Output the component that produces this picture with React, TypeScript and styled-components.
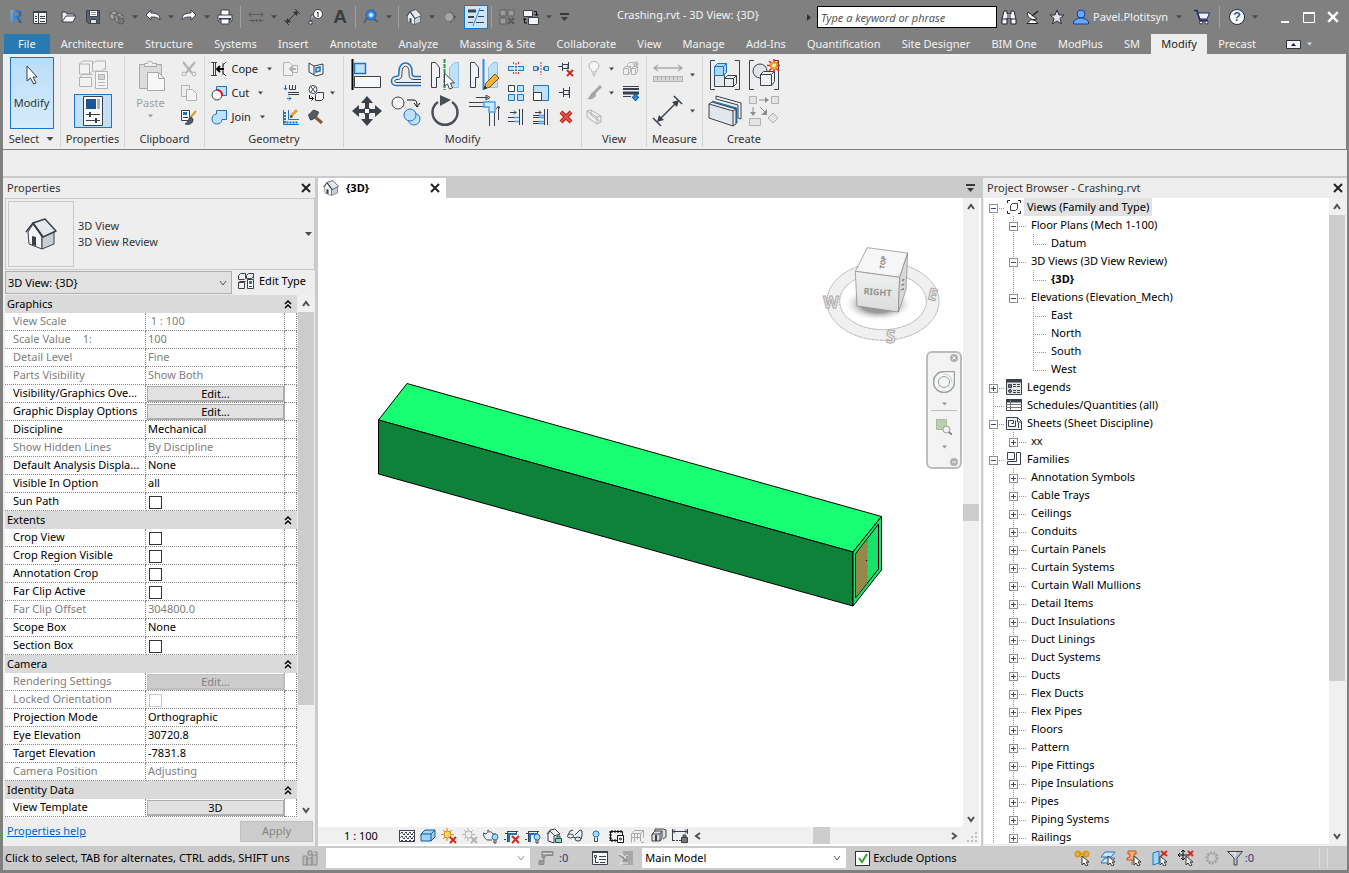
import React, { ReactNode } from "react";
import styled, { createGlobalStyle, css } from "styled-components";

/* ---------- palette ---------- */
const D = "#3a404c";
const B = "#1d74c4";
const L = "#bfe1f8";
const G = "#b2b2b2";
const R = "#d42a1e";
const FRAME = "#808080";
const PANEL = "#eeeeee";
const EDGE = "#cbcbcb";

const GlobalStyle = createGlobalStyle`
  *, *::before, *::after { box-sizing: border-box; }
  body { margin: 0; background: ${FRAME}; overflow: hidden; }
  body, button, input, select, table {
    font-family: "Noto Sans", "Open Sans", sans-serif;
    font-size: 11px;
    line-height: 16px;
    color: #000;
  }
  button, input, select { margin: 0; padding: 0; border: 0; background: none; }
  ul { margin: 0; padding: 0; list-style: none; }
  svg { display: block; flex: none; }
`;

/* ---------- icons ---------- */
type Draw = { w?: number; h?: number; box?: string; children: ReactNode };
const Pic = ({ w = 16, h = w, box, children }: Draw) => (
  <svg width={w} height={h} viewBox={box ?? `0 0 ${w} ${h}`} fill="none" stroke={D} aria-hidden="true">
    {children}
  </svg>
);

const Tri = ({ c = "#4a4a4a", s = 7 }: { c?: string; s?: number }) => (
  <svg width={s} height={4} viewBox="0 0 7 4" aria-hidden="true"><path d="M0 0h7L3.500 4z" fill={c} /></svg>
);
const Chevron = ({ dir, c = "#505050", w = 2 }: { dir: "up" | "down" | "left" | "right"; c?: string; w?: number }) => {
  const d = { up: "M2 7l3-4 3 4", down: "M2 3l3 4 3-4", left: "M7 2L3 5l4 3", right: "M3 2l4 3-4 3" }[dir];
  return <Pic w={10}><path d={d} stroke={c} strokeWidth={w} /></Pic>;
};
const Cross = ({ s = 10, c = "#222", w = 2 }: { s?: number; c?: string; w?: number }) => (
  <Pic w={s} box="0 0 10 10"><path d="M1 1l8 8M9 1l-8 8" stroke={c} strokeWidth={w} /></Pic>
);
const House = ({ s = 16 }: { s?: number }) => (
  <Pic w={s} box="0 0 32 32">
    <path d="M3 14l5-8 9 13v12L4 26z" fill="#f4f5f6" strokeLinejoin="round" />
    <path d="M17 19l12-6v13l-12 5z" fill="#c9ced4" strokeLinejoin="round" />
    <path d="M8 5l12-4 11 12-13 6z" fill="#e6e9ec" strokeWidth="1.500" strokeLinejoin="round" />
    <path d="M1 14l7-9 10 14" strokeWidth={s < 20 ? 2 : 1.5} />
    <path d="M7 18l4 1v9l-4-1z" fill={D} stroke="none" />
  </Pic>
);
const RLogo = styled.span`
  font: bold 18px/18px "Liberation Sans", sans-serif;
  background: linear-gradient(100deg, #7fc0f2, #2b7fd0 45%, #17508f);
  background-clip: text; color: transparent;
`;
const PanelIcon = () => (
  <Pic><path d="M1.500 2.500h13v12h-13z" fill="#f4f4f4" /><path d="M1 3h14" strokeWidth="2" /><path d="M3 7.500h2M3 9.500h2M3 12.500h2M8 7.500h5M8 9.500h5M8 12.500h5M6.500 4v10" /></Pic>
);
const Folder = () => (
  <Pic><path d="M1 13V3h4l1 2h7v3" fill="#e8e8e8" /><path d="M1 13l4-6h10l-3 6z" fill="#fff" /></Pic>
);
const Save = () => (
  <Pic><path d="M1.500 1.500h13v13h-11l-2-2z" fill="#5b6170" /><path d="M4.500 1.500h8v6h-8z" fill="#fff" /><path d="M5.500 10.500h6v4h-6z" fill="#e0e0e0" /><path d="M6 3.500h5M6 5.500h5" stroke="#999" /></Pic>
);
const Sync = () => (
  <Pic><path d="M1 4l4-2 4 2v5l-4 2-4-2zM6 6l4-2 4 2v6l-4 2-4-2z" fill="#a9a9a9" stroke="#626262" /><path d="M1 4l4 2 4-2M6 6l4 2 4-2M10 8v6M5 6v5" stroke="#626262" /><circle cx="12" cy="12" r="3" fill="#777" stroke="#5c5c5c" /></Pic>
);
const Undo = ({ flip }: { flip?: boolean }) => (
  <Pic><path d={flip ? "M15 6l-5-5v3C4 4 1 6 1 11c2-3 5-3 9-3v3z" : "M1 6l5-5v3c6 0 9 2 9 7-2-3-5-3-9-3v3z"} fill="#fff" /></Pic>
);
const Print = () => (
  <Pic><path d="M4 6V1h8v5" fill="#fff" /><path d="M1 6h14v6H1z" fill="#f3f3f3" /><path d="M2 10h12" strokeWidth="2" /><path d="M4 10h8v5H4z" fill="#fff" /></Pic>
);
const MeasureSmall = () => (
  <Pic><path d="M1 5.500h14M3 3L1 5.500l2 2.500M13 3l2 2.500-2 2.500M1 11.500h14M4.500 10v3M8.500 10v3M12.500 10v3" stroke="#5c5c5c" /></Pic>
);
const DimSmall = () => (
  <Pic><path d="M3 13L13 3" stroke="#333" /><path d="M2 14l1-5 4 4zM14 2l-5 1 4 4z" fill="#333" stroke="none" /><path d="M0 11l5 5M11 0l5 5" stroke="#333" /></Pic>
);
const Tag = () => (
  <Pic><circle cx="10" cy="5" r="4.500" fill="#fff" /><path d="M5 6H3v7M1 12h3v3H1z" fill="#fff" /><path d="M9 4l1-1v5" stroke="#222" /></Pic>
);
const LetterA = styled.span`font: bold 19px/20px "Liberation Sans", sans-serif; color: #3c3c3c;`;
const Sphere = () => (
  <Pic><path d="M4 9l-3 5M11 10l4 3" stroke="#56606c" strokeWidth="2" /><circle cx="8" cy="6" r="5" fill="#2f86d8" stroke="#1f5fa5" /><circle cx="8" cy="6" r="2" fill="#dceefb" stroke="#9fcaf0" /></Pic>
);
const SectionMark = () => (
  <Pic><path d="M8 2l6 6-6 6z" fill="#4a4a4a" stroke="none" /><circle cx="7" cy="8" r="4.500" fill="#a5a5a5" stroke="#777" /></Pic>
);
const ThinLines = () => (
  <Pic w={18}><path d="M1 3h8" strokeWidth="3" /><path d="M1 9h6" strokeWidth="2" /><path d="M1 14.500h5M12 2.500h5M11 8.500h6M9 14.500h8" /><path d="M13 0L6 18" stroke="#2f8de6" /></Pic>
);
const CloseHidden = () => (
  <Pic><path d="M1 1h6v6H1zM9 1h6v6H9zM1 9h6v6H1z" fill="#9b9b9b" stroke="#606060" /><path d="M9 9l6 6M15 9l-6 6" stroke="#5a5a5a" strokeWidth="2" /></Pic>
);
const Switch = () => (
  <Pic><path d="M.5 1.500h9v6h-9zM5.500 8.500h10v7h-10z" fill="#f4f4f4" /><path d="M11 2.500h2.500V6M1.500 10v4H4" stroke="#111" /><path d="M11.500 5l2 2 2-2M0 11l1.500-2L3 11" stroke="#111" /></Pic>
);
const Customize = () => (
  <Pic w={9} h={8}><path d="M0 1h9" stroke="#3a3a3a" strokeWidth="2" /><path d="M1 4h7L4.500 8z" fill="#3a3a3a" stroke="none" /></Pic>
);
const Binoculars = () => (
  <Pic><path d="M3 2h3v3h4V2h3l2 8v5h-5V9H6v6H1v-5z" fill="#f5f5f5" stroke="#1f2430" /><path d="M1 10h5M10 10h5M6 7h4" stroke="#1f2430" /></Pic>
);
const Dish = () => (
  <Pic><path d="M2 14.500h11l-3-3-4-1z" fill="#fff" stroke="#222" /><path d="M3 3c-2 5 3 9 9 7z" fill="#fff" stroke="#222" /><path d="M7 7l6-5" stroke="#222" strokeWidth="1.500" /></Pic>
);
const Star = () => (
  <Pic><path d="M8 1l2 5h5l-4 3.500 1.500 5.500L8 12l-4.500 3L5 9.500 1 6h5z" fill="#dfe3e8" stroke="#2a2d36" /></Pic>
);
const User = () => (
  <Pic><circle cx="8" cy="5" r="4" fill="#6aa8ff" stroke="#173c8a" /><path d="M.5 15v-2c1-3 5-3 5.500-4h4c.5 1 4.500 1 5.500 4v2z" fill="#6aa8ff" stroke="#173c8a" /></Pic>
);
const Cart = () => (
  <Pic><path d="M3 4h12.500L13 10H6z" fill="#f0f0ff" stroke="#202a66" /><path d="M0 1.500h3l3 10h8" stroke="#202a66" strokeWidth="1.500" /><circle cx="7" cy="13.500" r="1.500" fill="#fff" stroke="#202a66" /><circle cx="12.500" cy="13.500" r="1.500" fill="#fff" stroke="#202a66" /></Pic>
);
const HelpMark = styled.span`
  display: grid; place-items: center; width: 16px; height: 16px; border-radius: 50%;
  border: 1px solid #1e2b44; background: #fff; color: #1f5bbf; font: bold 13px/14px "Liberation Sans", sans-serif;
`;
const Minimise = () => <Pic w={12}><path d="M2 11h8" stroke="#fff" strokeWidth="2" /></Pic>;
const Maximise = () => <Pic w={12}><path d="M.5 1.500h11v10h-11z" stroke="#fff" /><path d="M0 2h12" stroke="#fff" strokeWidth="2" /></Pic>;

const Cursor = () => (
  <Pic w={14} h={20}><path d="M2 1v15l3.500-3 3 6 2.500-1-3-6h4z" fill="#fff" /></Pic>
);
const TypeProps = () => (
  <Pic w={32}>
    <path d="M2.500 5l3-3h10v10l-3 3h-10zM15.500 5l3-3h10v9M15.500 5v7h9l4-3M2.500 18.500h12v9h-12zM2.500 18.500l3-3h10M2.500 5h10v10" fill="#f2f2f2" stroke={G} />
    <path d="M18.500 12.500h12v17h-12z" fill="#f5f5f5" stroke={G} /><path d="M21.500 15.500h6v5h-6z" stroke={G} fill="#d4d4d4" /><path d="M21 23.500h7M21 26.500h7" stroke={G} />
  </Pic>
);
const PropsBig = () => (
  <Pic w={20} h={30}>
    <path d="M.5.5h19v29H.5z" fill="#f8fafc" /><path d="M3 3h10v10H3z" fill="#1b5596" stroke="none" /><path d="M14 3h3v10h-3z" fill="#9fb4c8" stroke="none" />
    <path d="M3 18.500h14M3 24.500h14" /><path d="M7 16v5M13 22v5" strokeWidth="2" />
  </Pic>
);
const Paste = () => (
  <Pic w={32}>
    <path d="M4.500 4.500h22v24h-22z" fill="#dcdcdc" stroke="#a9a9a9" /><path d="M9.500 6.500v-3h3c0-3 5-3 5 0h4v3z" fill="#f0f0f0" stroke="#a9a9a9" />
    <path d="M12.500 12.500h11l6 6v12h-17z" fill="#f7f7f7" stroke="#a9a9a9" /><path d="M23.500 12.500v6h6" stroke="#a9a9a9" />
  </Pic>
);
const Scissors = () => (
  <Pic><path d="M2 1l9 11M14 1L5 12" stroke={G} strokeWidth="2" /><circle cx="3" cy="13" r="2" stroke={G} /><circle cx="13" cy="13" r="2" stroke={G} /></Pic>
);
const CopyIcon = () => (
  <Pic><path d="M.5.500h8v3M.5.500v11h5" stroke={G} /><path d="M5.500 4.500h6l4 4v7h-10z" fill="#f3f3f3" stroke={G} /></Pic>
);
const MatchType = () => (
  <Pic><path d="M.5 1.500h8v10h-8z" fill="#fff" /><path d="M2 3h4v3H2z" fill={B} stroke="none" /><path d="M2 8.500h5" /><path d="M15 2l-6 7" stroke="#d69a3c" strokeWidth="2" /><path d="M10 8c-3 1-2 5-6 7 4 1 8 0 8-5z" fill="#555c68" /></Pic>
);
const Cope = () => (
  <Pic><path d="M0 1.500h6M0 14.500h6M2.500 2v12M4.500 2v12M15 1l-3 3v8l3 3M12 6V2M12 10v4" /><path d="M6 8h7M9 5L6 8l3 3" stroke="#000" strokeWidth="2" /></Pic>
);
const CutIcon = () => (
  <Pic><path d="M5.500 1.500h10v9h-10z" fill={L} stroke={B} /><circle cx="6" cy="10" r="5" fill="#fff" /><path d="M6 5a5 5 0 0 1 5 5" stroke="#f00" strokeWidth="2" /></Pic>
);
const Join = () => (
  <Pic><path d="M5.500 1.500h10v9h-4.500a5 5 0 1 1-5.500-5.500z" fill={L} stroke={B} /></Pic>
);
const Offset16 = () => (
  <Pic><path d="M.5 1.500h6l3 3h5v7h-5v3h-9z" fill="#f1f1f1" stroke={G} /><path d="M13 8H8M10 5L7 8l3 3" stroke={G} strokeWidth="2" /></Pic>
);
const Opening = () => (
  <Pic><path d="M1 2l5 3 9-2v10l-7 2-7-4z" fill="#eef2f5" /><path d="M6 5v9" /><path d="M8 7l4-1v4l-4 1z" fill={L} stroke={B} strokeWidth="1.500" /></Pic>
);
const BeamJoin = () => (
  <Pic><path d="M2.500 0v5M1 3l1.500 2L4 3M4 13.500h4M6 11.500l2 2-2 2" stroke={B} /><path d="M5 7.500h11M5 9.500h11M6.500 0v4.500h6V0M9.500 0v4" /></Pic>
);
const WallJoin = () => (
  <Pic><circle cx="5" cy="4.500" r="4" fill="#fff" /><path d="M3 2l4 5M7 2L3 7" /><path d="M7.500 9.500l2-2h6v6l-2 2h-6z" fill="#f2f4f6" /><path d="M1.500 10v3.500H5M3.500 11.500l2 2-2 2" stroke="#000" /></Pic>
);
const SplitFace = () => (
  <Pic><path d="M.5 1v14.500H16M5.500 1v9.500H16" stroke={B} /><path d="M2 3v10.500h13" stroke={B} strokeWidth="2" strokeDasharray="2 1" /><path d="M14 1L7 8" stroke="#e3a33b" strokeWidth="3" /><path d="M7 9l1-3 2 2z" fill="#333" stroke="none" /></Pic>
);
const Hammer = () => (
  <Pic><path d="M6 7l8 7" stroke="#8a5a33" strokeWidth="3" /><path d="M.5 6l5-5 5 2-1 3-4 4-3 1z" fill="#555c68" /></Pic>
);
const Align = () => (
  <Pic w={32}><path d="M1.500 0v31" stroke="#000" strokeWidth="2" /><path d="M3.500 4.500h11v10h-11z" fill={L} stroke={B} strokeWidth="1.500" /><path d="M3.500 17.500h26v11h-26z" fill="#f7f7f7" /></Pic>
);
const Offset = () => (
  <Pic w={32}>
    <path d="M31 26.500H6c-6 0-6-9 0-9 3 0 3-2 3-5C9 1 22 1 22 12.500c0 3 0 5 3 5h6" stroke={B} strokeWidth="1.500" />
    <path d="M31 23.500H7c-3 0-3-3 0-3 5 0 5-3 5-8 0-7 7-7 7 0 0 5 0 8 6 8h6" />
  </Pic>
);
const Mirror = ({ draw }: { draw?: boolean }) => (
  <Pic w={32}>
    <path d="M2.500 3.500h4l4 5v10h-3v10h-5z" fill="#f1f3f5" /><path d="M29.500 3.500h-4l-5 5v20h9z" fill={L} stroke="#8dc0ea" />
    {draw ? (
      <><path d="M15.500 0v31" stroke="#2f8de6" strokeWidth="2" /><path d="M16 30l2-6 9-9 4 4-9 9z" fill="#f2b33d" stroke="#7a5020" /><path d="M16 30l1-3 2 2z" fill="#333" /></>
    ) : (
      <><path d="M15.500 0v31" stroke="#2c9a3a" strokeWidth="2" strokeDasharray="4 1" /><path d="M15.500 14v13l3-2 2 5 3-1-2-5h4z" fill="#fff" /></>
    )}
  </Pic>
);
const Move = () => (
  <Pic w={32}>
    <path d="M16 1l6 7h-4v5h-4V8h-4zM16 31l6-7h-4v-5h-4v5h-4zM1 16l7-6v4h5v4H8v4zM31 16l-7-6v4h-5v4h5v4z" fill={D} stroke="none" />
    <path d="M13.500 13.500h5v5h-5z" fill="#fff" />
  </Pic>
);
const CopyBig = () => (
  <Pic w={32}><circle cx="8" cy="8" r="6" fill="#f4f4f4" /><path d="M17 5h6c3 0 4 1 4 6M24 8l3 4 3-4" stroke="#111" /><circle cx="24" cy="24" r="6" fill={L} stroke={B} /><circle cx="20" cy="20" r="6" fill={L} stroke={B} /></Pic>
);
const Rotate = () => (
  <Pic w={32}><path d="M9 7a12.500 12.500 0 1 0 14 0" stroke="#4a4f58" strokeWidth="2.500" /><path d="M11 0l11 5-11 6z" fill="#4a4f58" stroke="none" /></Pic>
);
const TrimCorner = () => (
  <Pic w={32}><path d="M1 7.500h15M1 11.500h15M21.500 17v14M26.500 17v14" /><path d="M16 7h11v10h-6v-5h-5z" fill="#cfe8fb" stroke="#4ba3ee" strokeWidth="1.500" /><path d="M8 2.500h12M18 0l4 2.500L18 5zM30.500 25V12M28 14l2.500-3 2 3" /></Pic>
);
const Split1 = () => (
  <Pic><path d="M.5 5.500h15v4H.500z" fill={L} stroke={B} /><path d="M6.500 3v9M9.500 3v9" stroke="#eee" /><path d="M5.500 1v3M10.500 1v3M5.500 11v3M10.500 11v3M8 2v11" stroke={R} strokeDasharray="2 1" /></Pic>
);
const Split2 = () => (
  <Pic><path d="M.5 5.500h4v4h-4zM11.500 5.500h4v4h-4z" fill={L} stroke={B} /><path d="M8 1v13" stroke={R} strokeDasharray="2 1" /><path d="M5.500 6v3M10.500 6v3" stroke={B} /></Pic>
);
const Unpin = () => (
  <Pic><path d="M0 5.500h4M4.500 2v8M4 3.500h6v4H4M10.500 1v7" /><path d="M9 9l6 6M15 9l-6 6" stroke={R} strokeWidth="2" /></Pic>
);
const Pin = () => (
  <Pic><path d="M1 7.500h4M5.500 3v9M5 5.500h6v4H5M11.500 2v11" /></Pic>
);
const ArrayIcon = () => (
  <Pic><path d="M.5.500h6v6h-6z" fill="#f7f7f7" /><path d="M9.500.500h6v6h-6zM.5 9.500h6v6h-6zM9.500 9.500h6v6h-6z" fill={L} stroke={B} /></Pic>
);
const Scale = () => (
  <Pic><path d="M.5.500h15v15H.500z" fill={L} stroke={B} /><path d="M.5 7.500h8v8h-8z" fill="#fff" /></Pic>
);
const Trim1 = ({ multi }: { multi?: boolean }) => (
  <Pic>
    <path d="M0 8.500h6M0 12.500h6M11.500 0v16M14.500 0v16M2 3.500h6M6 1.500l2 2-2 2" />{multi && <path d="M0 6.500h6M0 14.500h6" />}
    <path d={multi ? "M6 6.500h5M6 8.500h5M6 12.500h5M6 14.500h5" : "M6 8.500h5M6 12.500h5"} stroke="#4ba3ee" strokeWidth="1.500" />
  </Pic>
);
const Delete = () => (
  <Pic><path d="M3 3l10 10M13 3L3 13" stroke="#a8231a" strokeWidth="4" /><path d="M3 3l10 10M13 3L3 13" stroke="#f0503f" strokeWidth="2" /></Pic>
);
const Bulb = () => (
  <Pic><path d="M6 11c0-3-3-3-3-6 0-6 10-6 10 0 0 3-3 3-3 6zM6 13h4M7 15h2" fill="#f7f7f7" stroke={G} /></Pic>
);
const Brush = () => (
  <Pic><path d="M15 1L8 8" stroke="#a4a4a4" strokeWidth="3" /><path d="M8 7c-4 0-3 5-7 7 5 1 9-1 9-5z" fill="#a4a4a4" stroke="none" /></Pic>
);
const Cubes = () => (
  <Pic><path d="M.5 7.500l2-2h5v5l-2 3h-5zM.5 7.500h5v6M5.500 7.500l2-2M8.500 7.500l2-2h4v5l-2 3h-4zM8.500 7.500h4v6M12.500 7.500l2-2M4.500 5V3.500l2-2h4" fill="#f0f0f0" stroke={G} /><path d="M13 0v6M10 3h6M11 1l4 4M15 1l-4 4" stroke={G} /></Pic>
);
const Linework = () => (
  <Pic><path d="M0 1.500h16M0 11.500h8" /><path d="M0 4h16" strokeWidth="2" /><path d="M0 8h16" strokeWidth="3" /><path d="M11 9h3v3h2l-3.500 4L9 12h2z" fill="#2f8de6" stroke="#0d4f94" /></Pic>
);
const Box3 = () => (
  <Pic><path d="M1 2l4-1 10 6v6l-4 2L1 8zM1 2l10 6v7M11 8l4-1M5 1v5l10 7" stroke={G} /></Pic>
);
const RulerBig = () => (
  <Pic w={32}><path d="M2 9h28M6 6L2 9l4 3M26 6l4 3-4 3" stroke="#a9a9a9" strokeWidth="1.500" /><path d="M1.500 17.500h29v5h-29z" fill="#d8d8d8" stroke={G} /><path d="M5.500 18v3M9.500 18v3M13.500 18v3M17.500 18v3M21.500 18v3M25.500 18v3" stroke={G} /></Pic>
);
const DimBig = () => (
  <Pic w={32}><path d="M7 25L25 7" strokeWidth="1.500" /><path d="M5 27l2-7 5 5zM27 5l-7 2 5 5z" fill={D} stroke="none" /><path d="M1 23l8 8M22 1l8 8" strokeWidth="1.500" /></Pic>
);
const Bracket = () => <path d="M6 1.500H1.500v29H6M26 1.500h4.500v29H26" />;
const CreateParts = () => (
  <Pic w={32}><Bracket /><path d="M5.500 16.500h10v11h-10z" fill="#e4e9ee" /><path d="M15.500 19.500l3-3h9v8l-3 3h-9zM15.500 19.500h9v8M24.500 19.500l3-3" fill="#e9edf0" /><path d="M5.500 7.500l3-3h9v9l-3 3h-9zM5.500 7.500h9v9M14.500 7.500l3-3" fill="#a8d6f4" stroke={B} /></Pic>
);
const CreateAsm = () => (
  <Pic w={32}>
    <Bracket /><circle cx="12" cy="12" r="7" fill="#dde4ea" /><path d="M12.500 15.500l3-3h11v10l-3 4h-11zM12.500 15.500h11v11M23.500 15.500l3-3" fill="#f1f3f5" />
    <path d="M26 0v13M19 6.500h13M21 2l10 10M31 2L21 12" stroke="#e6261b" strokeWidth="1.500" /><circle cx="26" cy="6.500" r="4" fill="#ff8f1f" stroke="none" /><circle cx="26" cy="6.500" r="2" fill="#fff6a0" stroke="none" />
  </Pic>
);
const Group = () => (
  <Pic w={34} h={32}><path d="M8 1l25 7v16l-3-1V10L8 4z" fill="#eef1f4" /><path d="M4 6l25 7v15l-3-1" fill="#2f8de6" stroke={B} /><path d="M1 9l24 7v15L1 23zM1 9l3-2 24 7v15l-3 2M25 16l3-2" fill="#e2e7ec" /></Pic>
);
const Similar = () => (
  <Pic w={32}><path d="M1.500 1.500h7v7h-7zM23.500 1.500h7v7h-7zM1.500 23.500h11v7h-11zM25 18l5 5-5 5-5-5z" fill="#e4e4e4" stroke="#b0b0b0" /><path d="M11 5h9M5 12v7M12 12l7 7" stroke="#8e8e8e" /><path d="M17 2l4 3-4 3zM2 17l3 4 3-4zM19 14v6h-6z" fill="#8e8e8e" stroke="none" /></Pic>
);
const EditTypeIcon = () => (
  <Pic><path d="M.5 2.500l2-2h5v5l-1 1h-6zM8.500 2.500l2-2h5v5M8.500 2.500v3h5l2-2M.5 9.500h6v6h-6zM.5 9.500l1-1h6" fill="#f3f3f3" /><path d="M9.500 6.500h6v9h-6z" fill="#fff" /><path d="M11 8h3v3h-3z" fill={B} stroke="none" /><path d="M11 13.500h3" /></Pic>
);

/* view control bar icons */
const Hatch = () => (
  <Pic>
    <path d="M0 2.500h16v11H.500V2.500M15.500 2v12" fill="#f7f7f7" />
    <path d="M2 4.500h13M2 8.500h13M2 12.500h13" strokeDasharray="2 2" /><path d="M4 6.500h11M4 10.500h11" strokeDasharray="2 2" />
    <path d="M1 5.500h14M1 9.500h14" strokeDasharray="1 1" stroke="#8a8e96" />
  </Pic>
);
const BlueBox = () => <Pic><path d="M1 6l4-4h10v7l-4 4H1zM1 6h10v7M11 6l4-4" fill="#9fd4f8" stroke="#14589b" /></Pic>;
const SunOff = ({ off }: { off?: boolean }) => (
  <Pic>
    <path d="M6 0v13M0 6.500h13M2 2l9 9M11 2l-9 9" stroke={off ? G : "#d98a1c"} /><circle cx="6.500" cy="6.500" r="3.500" fill={off ? "#eee" : "#ffd56a"} stroke={off ? G : "#d98a1c"} />
    <path d="M9 9l6 6M15 9l-6 6" stroke={off ? G : R} strokeWidth="2" />
  </Pic>
);
const Teapot = () => <Pic><path d="M0 5l3 1c1-3 6-3 7 0h3v3M0 5c1 5 3 7 5 7h4M4 3l2-1" fill="#f4f4f4" /><circle cx="12" cy="9" r="3" fill="#a8dcff" stroke={B} /><path d="M11 12v3h2v-3" /></Pic>;
const CropOff = ({ shown }: { shown?: boolean }) => (
  <Pic><path d="M3.500 3v11M0 11.500h2M12.500 3v4M1 5.500h2" /><path d="M4 6h9M5 6v8" stroke={B} strokeWidth="2" /><path d="M3 3.500h11" />{shown ? <><circle cx="12" cy="9" r="3" fill="#a8dcff" stroke={B} /><path d="M11 12v3h2v-3" /></> : <path d="M8 8l7 7M15 8l-7 7" stroke={R} strokeWidth="2" />}</Pic>
);
const LockHouse = () => <Pic><path d="M1 6l3-4 5-1 5 5-6 2v7l-6-2V6l2-3 5 5" fill="#f4f4f4" /><path d="M9.500 10.500h6v4h-6zM11 10V8h3v2" fill="#8fd4c8" /></Pic>;
const Glasses = () => <Pic><path d="M1 7l2-4 3-1M6 9l3 1M8 7l5-5 2 1v5l-1 3" /><ellipse cx="3.500" cy="8" rx="3" ry="2" fill="#e3eef5" /><ellipse cx="11" cy="11" rx="3" ry="2" fill="#e3eef5" /></Pic>;
const Lamp = () => <Pic><circle cx="8" cy="6" r="3" fill="#a8dcff" stroke={B} /><path d="M6.500 9.500v4h3v-4" /></Pic>;
const Temp = () => <Pic><path d="M1.500 3.500h12v9h-12z" stroke="#111" /><path d="M1.500 3v10M2 3.500h12M2 12.500h6" stroke="#111" strokeWidth="2" strokeDasharray="2 1" /><path d="M8.500 7.500h6v7h-6z" fill="#fff" stroke="#111" /><circle cx="11.500" cy="11" r="1" stroke="#111" /></Pic>;
const Analytic = () => <Pic><path d="M2.500 4.500l2-2h9v7M1.500 5.500h9v8M1.500 5.500v9M4.500 5.500v8M7.500 5.500v6M1.500 9.500h9M10.500 5.500l3-3M11 14.500h3" stroke="#aaa" /></Pic>;
const Displace = () => <Pic><path d="M1 6l3-3h7l-2 3v7H1zM1 6h8M11 3v7l-2 3M4 3V1h8l3 1v7l-3 2" fill="#d9dde1" stroke="#444" /><path d="M5 7v6" strokeWidth="2" /></Pic>;
const Constraints = () => <Pic><path d="M.5 1v12M15.500 1v5M1 3.500h14M3 1.500l-2 2 2 2M13 1.500l2 2-2 2" /><path d="M1 12.500h8" strokeDasharray="2 1" /><path d="M9.500 9.500h6v5h-6zM11 9V7h3v2" fill="#777" /></Pic>;

/* status bar icons */
const Worksets = () => <Pic><path d="M1 6h4v9H1zM5 8h5v7H5zM10 5h5v10h-5zM6 1h4v4H6zM12 2h3v3" fill="#bcbcbc" stroke="#8c8c8c" /></Pic>;
const EditReq = () => <Pic><path d="M4 1.500h11v4H8l-2 3v6H1v-4h4l1-3H4z" fill="#9a9a9a" stroke="#888" /><path d="M5 3.500h9" stroke="#ddd" /></Pic>;
const OptionsIcon = () => <Pic><path d="M.5 1.500h15v13H.500z" fill="#f8f8f8" /><path d="M0 2h16" strokeWidth="2" /><path d="M2.500 5.500h2v2h-2zM3.500 8v4.500h3M7 6.500h7M7 9.500h7M8 12.500h5" /></Pic>;
const AddSet = () => <Pic><path d="M5 1h10v14H5z" fill="#a8a8a8" stroke="none" /><path d="M1 4c5 0 6 3 7 5M9 5v6H3zM2 13h8" stroke="#e8e8e8" /><path d="M1 5l8 6M9 6v5H4" stroke="#777" /></Pic>;
const Pointer = () => <path d="M8 6v9l2-2 2 3 2-1-2-3h3z" fill="#fff" stroke="#333" />;
const SelLinks = () => <Pic><circle cx="4" cy="4" r="2.500" stroke="#dc9a13" strokeWidth="2" /><circle cx="12" cy="4" r="2.500" stroke="#dc9a13" strokeWidth="2" /><path d="M4 4h8" stroke="#dc9a13" strokeWidth="2" /><Pointer /></Pic>;
const SelUnder = () => <Pic><path d="M5 2h10l-4 5H1zM5 8h10l-4 5H1z" fill="#cfe6f8" stroke={B} /><Pointer /></Pic>;
const SelPin = () => <Pic><path d="M2 1h8v3H8v3l3 1v2H1V8l3-1V4H2zM6 10v5" fill="#f6b26b" stroke="#c0512b" /><Pointer /></Pic>;
const SelFace = () => <Pic><path d="M1 3l6-2v12l-6 2z" fill="#a6d6f7" stroke={B} /><path d="M9 1l6 5M15 1L9 6" stroke={R} strokeWidth="2" /><Pointer /></Pic>;
const SelDrag = () => <Pic><path d="M5 0v10M0 5h10M3 2l2-2 2 2M3 8l2 2 2-2M2 3L0 5l2 2" stroke="#111" /><path d="M10 1l5 5M15 1l-5 5" stroke={R} strokeWidth="2" /><Pointer /></Pic>;
const Gear = () => <Pic><circle cx="8" cy="8" r="5" stroke="#a2a2a2" strokeWidth="3" strokeDasharray="2 1" /></Pic>;
const Funnel = () => <Pic><path d="M.5 1.500h15L10 8v7H7V8z" fill="#b9c2cc" stroke="#444" /><path d="M3 3h6L7 7" stroke="#fff" /></Pic>;

/* browser icons */
const BViews = () => <Pic><path d="M4 1.500H1.500V4M12 1.500h2.500V4M4 14.500H1.500V12M12 14.500h2.500V12" stroke="#222" /><path d="M4.500 6.500l2-2h5v5l-2 2h-5z" stroke="#444" fill="#fff" strokeLinejoin="round" /></Pic>;
const BLegends = () => <Pic><path d="M.5.500h15v15H.500z" fill="#e6e6e6" /><path d="M0 2h16" strokeWidth="3" /><path d="M2.500 5.500h3v3h-3z" fill="#777" /><circle cx="4" cy="12" r="1.500" fill="#777" /><path d="M7 5.500h7M7 7.500h7M7 11.500h7M7 13.500h7" strokeDasharray="3 1" /></Pic>;
const BSched = () => <Pic><path d="M.5 2.500h15v11H.500z" fill="#fff" /><path d="M0 4h16" strokeWidth="3" /><path d="M4.500 3v11M0 7.500h16M0 10.500h16" stroke="#777" /></Pic>;
const BSheets = () => <Pic><path d="M.5 2.500h11l4 4v8H.500z" fill="#f3f3f3" /><path d="M2.500 5.500h5v3h-2M2.500 5.500v6h7v-6M11.500 3v4h4M12.500 8v5" /></Pic>;
const BFam = () => <Pic><path d="M1.500 1.500h7v7h-7zM10.500 1.500h4v12h-13v-3h9z" fill="#fff" /></Pic>;

/* ---------- shared controls ---------- */
const Window = styled.div`
  display: flex; flex-direction: column; height: 100vh; min-width: 1200px;
  background: ${FRAME}; padding: 0 2px 3px 3px; user-select: none;
`;
const IconButton = styled.button<{ $w?: number; $on?: boolean }>`
  display: grid; place-items: center; flex: none; width: ${p => p.$w ?? 24}px; height: 24px;
  ${p => p.$on && css`background: #cbe6fb; border: 1px solid ${B};`}
`;

/* ---------- title bar ---------- */
const TitleBar = styled.header`
  display: flex; align-items: center; height: 34px; flex: none; padding: 0 2px 0 1px;
`;
const Bar = styled.div`display: flex; align-items: center;`;
const TitleRule = styled.i`flex: none; width: 1px; height: 22px; margin: 0 3px; background: #a0a0a0;`;
const Gap = styled.i<{ $w: number }>`flex: none; width: ${p => p.$w}px;`;
const Title = styled.h1`
  flex: 1; margin: 0; padding-bottom: 4px; font-size: 11px; font-weight: 400; line-height: 16px; text-align: center; color: #f4f4f4;
`;
const Search = styled.input`
  width: 180px; height: 22px; border: 1px solid #000; background: #fff; padding: 0 3px; font-style: italic;
  &::placeholder { color: #555; opacity: 1; }
`;
const UserName = styled.button`color: #f4f4f4; width: 80px; text-align: left;`;

const Drop = () => <IconButton $w={12} aria-label="More"><Tri s={6} /></IconButton>;
const Tool = ({ name, on, children }: { name: string; on?: boolean; children: ReactNode }) => (
  <IconButton aria-label={name} $on={on}>{children}</IconButton>
);

/* ---------- ribbon tabs ---------- */
const TabRow = styled.nav`display: flex; align-items: stretch; height: 20px; flex: none; padding-left: 1px;`;
const TabList = styled.div`display: flex; justify-content: space-between; flex: 0 1 1262px;`;
const Tab = styled.button<{ $kind?: "file" | "active" }>`
  padding: 0 10px; color: #f2f2f2;
  ${p => p.$kind === "file" && css`background: #2a7ab2; padding: 0 14px;`}
  ${p => p.$kind === "active" && css`background: ${PANEL}; color: #1c1c1c;`}
`;
const Collapse = styled.button`display: flex; align-items: center; gap: 6px; margin-left: 20px;`;

/* ---------- ribbon ---------- */
const Ribbon = styled.section`
  display: flex; flex: none; height: 95px; padding: 2px 0; background: ${PANEL}; margin-right: 1px;
`;
const RibbonPanel = styled.div<{ $w: number; $last?: boolean }>`
  display: flex; flex-direction: column; flex: none; width: ${p => p.$w}px; border-right: ${p => (p.$last ? 0 : 1)}px solid #d4d4d4;
`;
const PanelBody = styled.div<{ $gap?: number }>`
  display: flex; flex: 1; justify-content: center; gap: ${p => p.$gap ?? 0}px; padding-top: 1px;
`;
const PanelTitle = styled.div`
  display: flex; align-items: center; justify-content: center; gap: 7px; height: 17px; color: #333;
`;
const Stack = styled.div<{ $rows: number; $cols?: string }>`
  display: grid; grid-template-rows: repeat(${p => p.$rows}, ${p => 72 / p.$rows}px);
  grid-template-columns: ${p => p.$cols ?? "auto"}; align-content: start;
`;
const BigButton = styled.button<{ $on?: boolean; $off?: boolean }>`
  display: flex; flex-direction: column; align-items: center; gap: 3px; width: 44px; height: 72px; padding-top: 3px;
  color: ${p => (p.$off ? "#a0a0a0" : "#333")};
  ${p => p.$on && css`background: linear-gradient(#b9ddf8, #d6ebfb); border: 1px solid ${B}; padding-top: 7px; gap: 10px;`}
`;
const RibbonCell = styled.button<{ $on?: boolean }>`
  display: flex; align-items: center; justify-content: center;
  ${p => p.$on && css`width: 38px; height: 34px; margin-top: 1px; background: #c2e1f9; border: 1px solid ${B};`}
`;
const TextTool = styled.button`display: flex; align-items: center; gap: 5px; color: #222; svg:last-child { margin-left: 4px; }`;
const OptionsBar = styled.div`
  flex: none; height: 29px; background: ${PANEL}; border-top: 1px solid ${FRAME}; border-bottom: 2px solid ${EDGE};
`;

/* ---------- docked area ---------- */
const Dock = styled.main`display: flex; flex: 1; min-height: 0; background: ${PANEL};`;
const PaletteHead = styled.div`
  display: flex; align-items: center; justify-content: space-between; flex: none; height: 20px; padding: 0 3px 0 4px; color: #333;
`;
const CloseButton = styled.button`display: grid; place-items: center; width: 12px; height: 12px;`;

const ScrollColumn = styled.div<{ $flat?: boolean }>`
  display: flex; flex-direction: ${p => (p.$flat ? "row" : "column")}; flex: ${p => (p.$flat ? "1" : "none")};
  ${p => (p.$flat ? "height: 17px;" : "width: 16px;")} background: #f0f0f0;
`;
const ScrollEnd = styled.button`display: grid; place-items: center; width: 16px; height: 17px; flex: none;`;
const Part = styled.i<{ $grow: number; $thumb?: boolean }>`flex: ${p => p.$grow} 0 0; background: ${p => (p.$thumb ? "#cdcdcd" : "none")};`;
const Scroll = ({ parts, flat }: { parts: [number, number, number]; flat?: boolean }) => (
  <ScrollColumn $flat={flat}>
    <ScrollEnd aria-label="Back"><Chevron dir={flat ? "left" : "up"} /></ScrollEnd>
    <Part $grow={parts[0]} /><Part $grow={parts[1]} $thumb /><Part $grow={parts[2]} />
    <ScrollEnd aria-label="Forward"><Chevron dir={flat ? "right" : "down"} /></ScrollEnd>
  </ScrollColumn>
);

const Properties = styled.aside`
  display: flex; flex-direction: column; flex: none; width: 315px; border-right: 3px solid ${EDGE};
`;
const TypeBox = styled.button`
  display: flex; align-items: center; flex: none; height: 72px; margin: 0 0 0 2px; padding: 2px 1px 2px 2px; border: 1px solid #c9c9c9; text-align: left; color: #333;
  > svg:last-child { margin-left: auto; }
`;
const Thumb = styled.span`
  display: grid; place-items: center; width: 66px; height: 66px; margin-right: 4px; border: 1px solid #c9c9c9;
`;
const InstanceRow = styled.div`display: flex; align-items: center; flex: none; height: 25px; padding: 0 2px; gap: 6px;`;
const SelectWrap = styled.span<{ $w: number; $plain?: boolean; $h: number }>`
  display: grid; align-items: center; flex: none; width: ${p => p.$w}px; height: ${p => p.$h}px;
  background: ${p => (p.$plain ? "#fff" : "#e1e1e1")}; border: 1px solid ${p => (p.$plain ? "#fff" : "#adadad")};
  > * { grid-area: 1 / 1; }
  > svg { justify-self: end; margin-right: 3px; pointer-events: none; }
  > select { appearance: none; width: 100%; height: 100%; padding: 0 2px; outline: 0; }
`;
const EditType = styled.button`display: flex; align-items: center; gap: 5px; padding-bottom: 3px;`;
const GridArea = styled.div`display: flex; flex: 1; min-height: 0; margin-left: 2px; margin-right: 1px; justify-content: space-between;`;
const GridClip = styled.div`overflow: hidden; background: #fff; width: 292px;`;
const PropTable = styled.table`
  width: 292px; table-layout: fixed; border-collapse: separate; border-spacing: 0;
  td, th { height: 18px; padding: 0; border: 0; font-weight: 400; text-align: left; white-space: nowrap; line-height: 16px; }
`;
const Section = styled.th`
  && { background: #dadada; padding: 0 5px 0 2px; }
  > div { display: flex; justify-content: space-between; align-items: center; }
`;
const dots = "1px dotted #8a8a8a";
const Name = styled.th<{ $off?: boolean }>`
  && { padding: 0 0 1px 8px; border-right: ${dots}; border-bottom: ${dots}; color: ${p => (p.$off ? "#808080" : "#000")}; overflow: hidden; }
  > span { margin-left: 12px; }
`;
const Value = styled.td<{ $off?: boolean; $kind?: "button" | "check" }>`
  && {
    padding: ${p => (p.$kind ? "0 0 0 1px" : "0 0 1px 2px")};
    border-right: ${dots}; border-bottom: ${dots}; color: ${p => (p.$off ? "#808080" : "#000")};
  }
`;
const CellButton = styled.button`
  display: block; width: 138px; height: 16px; line-height: 13px; background: #e1e1e1; border: 1px solid #adadad; border-right-width: 2px; border-bottom-width: 2px;
  &:disabled { background: #cccccc; border-color: #bfbfbf; color: #838383; }
`;
const Tick = styled.input`
  display: block; appearance: none; width: 13px; height: 13px; margin: 2px 0 0 2px; border: 1px solid #333; background: #fff;
  &:disabled { border-color: #ccc; }
`;
const PropFoot = styled.div`
  display: flex; align-items: center; justify-content: space-between; flex: none; height: 28px; padding: 0 2px 2px 4px;
`;
const HelpLink = styled.a`color: #0066cc; text-decoration: underline;`;
const Apply = styled.button`width: 73px; height: 21px; background: #cccccc; border: 1px solid #bfbfbf; color: #838383;`;

type Prop = { n: string; extra?: string; v?: string; off?: boolean; kind?: "button" | "check" };
const groups: { title: string; rows: Prop[] }[] = [
  { title: "Graphics", rows: [
    { n: "View Scale", v: "\u00a01 : 100", off: true }, { n: "Scale Value", extra: "1:", v: "100", off: true },
    { n: "Detail Level", v: "Fine", off: true }, { n: "Parts Visibility", v: "Show Both", off: true },
    { n: "Visibility/Graphics Ove...", v: "Edit...", kind: "button" }, { n: "Graphic Display Options", v: "Edit...", kind: "button" },
    { n: "Discipline", v: "Mechanical" }, { n: "Show Hidden Lines", v: "By Discipline", off: true },
    { n: "Default Analysis Displa...", v: "None" }, { n: "Visible In Option", v: "all" }, { n: "Sun Path", kind: "check" } ] },
  { title: "Extents", rows: [
    { n: "Crop View", kind: "check" }, { n: "Crop Region Visible", kind: "check" }, { n: "Annotation Crop", kind: "check" },
    { n: "Far Clip Active", kind: "check" }, { n: "Far Clip Offset", v: "304800.0", off: true }, { n: "Scope Box", v: "None" },
    { n: "Section Box", kind: "check" } ] },
  { title: "Camera", rows: [
    { n: "Rendering Settings", v: "Edit...", off: true, kind: "button" }, { n: "Locked Orientation", off: true, kind: "check" },
    { n: "Projection Mode", v: "Orthographic" }, { n: "Eye Elevation", v: "30720.8" }, { n: "Target Elevation", v: "-7831.8" },
    { n: "Camera Position", v: "Adjusting", off: true } ] },
  { title: "Identity Data", rows: [{ n: "View Template", v: "3D", kind: "button" }] },
];
const FoldMark = () => <Pic w={8} h={10}><path d="M1 5l3-3 3 3M1 9l3-3 3 3" stroke="#000" strokeWidth="1.500" /></Pic>;

const PropertiesPalette = () => (
  <Properties>
    <PaletteHead>Properties<CloseButton aria-label="Close properties"><Cross s={10} /></CloseButton></PaletteHead>
    <TypeBox><Thumb><House s={32} /></Thumb><span>3D View<br />3D View Review</span><Tri s={9} /></TypeBox>
    <InstanceRow>
      <SelectWrap $w={227} $h={23}><select aria-label="Instance"><option>3D View: {"{3D}"}</option></select><Chevron dir="down" w={1} /></SelectWrap>
      <EditType><EditTypeIcon />Edit Type</EditType>
    </InstanceRow>
    <GridArea>
      <GridClip>
        <PropTable>
          <colgroup><col width="141" /><col width="139" /><col width="12" /></colgroup>
          <tbody>
            {groups.map(g => (
              <React.Fragment key={g.title}>
                <tr><Section colSpan={3}><div>{g.title}<FoldMark /></div></Section></tr>
                {g.rows.map(r => (
                  <tr key={r.n}>
                    <Name $off={r.off} scope="row">{r.n}{r.extra && <span>{r.extra}</span>}</Name>
                    <Value $off={r.off} $kind={r.kind}>
                      {r.kind === "button" ? <CellButton disabled={r.off}>{r.v}</CellButton>
                        : r.kind === "check" ? <Tick type="checkbox" aria-label={r.n} disabled={r.off} /> : r.v}
                    </Value>
                    <Value />
                  </tr>
                ))}
              </React.Fragment>
            ))}
          </tbody>
        </PropTable>
      </GridClip>
      <Scroll parts={[0, 392, 96]} />
    </GridArea>
    <PropFoot><HelpLink href="#help">Properties help</HelpLink><Apply disabled>Apply</Apply></PropFoot>
  </Properties>
);

/* ---------- drawing area ---------- */
const View = styled.section`display: flex; flex-direction: column; flex: 1; min-width: 0; background: #fff; padding: 0 2px 2px 0;`;
const ViewTabs = styled.div`
  display: flex; justify-content: space-between; align-items: stretch; flex: none; height: 20px; margin-right: -2px; padding-right: 6px; background: ${EDGE};
`;
const ViewTab = styled.div`display: flex; align-items: center; gap: 7px; width: 128px; padding: 0 5px; background: #fff; font-weight: 700; > button { margin-left: auto; }`;
const ViewList = styled.button`display: grid; place-items: center;`;
const CanvasRow = styled.div`display: flex; flex: 1; min-height: 0;`;
const Canvas = styled.div`position: relative; flex: 1; overflow: hidden;`;
const Model = styled.svg`position: absolute; left: 60px; top: 184px;`;
const Cube = styled.svg`position: absolute; right: 21px; top: 45px;`;
const NavBar = styled.div`
  position: absolute; right: 1px; top: 153px; display: flex; flex-direction: column; align-items: center;
  width: 36px; height: 118px; padding: 0; background: #f3f3f3; border: 2px solid #bcbcbc; border-radius: 6px;
  > button { display: grid; place-items: center; padding: 0; }
`;
const NavEnd = styled.button`align-self: flex-end; height: 10px; width: 12px;`;
const NavTool = styled.button<{ $h: number }>`height: ${p => p.$h}px;`;
const NavRule = styled.i`width: 26px; height: 1px; background: #bcbcbc; flex: none;`;
const ViewBar = styled.div`display: flex; align-items: center; flex: none; height: 17px; background: #f0f0f0; padding-left: 8px;`;
const ScaleButton = styled.button`width: 70px; text-align: center;`;
const ViewTool = styled.button`display: grid; place-items: center; width: 21px; height: 17px; flex: none;`;
const Grip = () => <Pic w={17}><path d="M13 5h2v2h-2zM13 9h2v2h-2zM13 13h2v2h-2zM9 9h2v2H9zM9 13h2v2H9zM5 13h2v2H5z" fill="#bfbfbf" stroke="none" /></Pic>;

const DuctModel = () => (
  <Model width="506" height="226" viewBox="378 382 506 226" stroke="#000" strokeWidth="1" strokeLinejoin="round" aria-hidden="true">
    <path d="M378.500 420L407 383.500L881.500 516.500L853 552z" fill="#19ff74" />
    <path d="M378.500 420L853 552V606L378.500 474z" fill="#0e8238" />
    <path d="M853 552L881.500 516.500V570L853 606z" fill="#17e368" />
    <path d="M855.500 554L878.500 524V569L855.500 598z" fill="#17e368" />
    <path d="M856 554.500L867 540V583L856 597z" fill="#97874a" stroke="none" />
    <path d="M867.500 540V582" stroke="#97874a" strokeDasharray="3 2" />
    <path d="M866 560.500h1" />
  </Model>
);
const Face = styled.text<{ $size: number }>`font: bold ${p => p.$size}px "Noto Sans", sans-serif; text-anchor: middle;`;
const ViewCube = () => (
  <Cube width="122" height="103" viewBox="60 205 366 309" fill="none" stroke="#a9a9a9" strokeWidth="2">
    <defs>
      <radialGradient id="shade"><stop offset="0.5" stopColor="#9a9a9a" /><stop offset="1" stopColor="#fff" stopOpacity="0" /></radialGradient>
      <linearGradient id="front" x1="0" y1="0" x2="0" y2="1"><stop offset="0" stopColor="#eff1f1" /><stop offset="1" stopColor="#dcdcdc" /></linearGradient>
    </defs>
    <path fillRule="evenodd" fill="#f0f0f0" strokeDasharray="6 2" strokeWidth="3" d="M81 380a168 117 0 1 0 336 0a168 117 0 1 0-336 0zM119 380a130 85 0 1 0 260 0a130 85 0 1 0-260 0z" />
    <ellipse cx="235" cy="388" rx="105" ry="52" fill="url(#shade)" stroke="none" />
    <path d="M202 219L323 235L299 308L166 290z" fill="#f6f6f6" stroke="#808080" />
    <path d="M166 290L299 308L295 412L171 394z" fill="url(#front)" stroke="#808080" />
    <path d="M299 308L323 235L318 345L295 412z" fill="#d9d9d9" stroke="#808080" />
    <path d="M306 318l7-4M305 332l8-4M304 346l8-4" stroke="#777" strokeWidth="4" />
    <Face $size={27} x="233" y="362" fill="#909090" stroke="none" transform="rotate(4 233 352)">RIGHT</Face>
    <Face $size={20} x="248" y="271" fill="#808080" stroke="none" transform="rotate(-80 248 263)">TOP</Face>
    <Face $size={48} x="93" y="400" fill="#ececec" strokeWidth="3">W</Face>
    <Face $size={52} x="272" y="505" fill="#ececec" strokeWidth="3">S</Face>
    <Face $size={48} x="398" y="376" fill="#ececec" strokeWidth="3" transform="rotate(14 398 360)">E</Face>
  </Cube>
);

const Dot = ({ minus }: { minus?: boolean }) => (
  <Pic w={8}><circle cx="4" cy="4" r="4" fill="#b0b0b0" stroke="none" /><path d={minus ? "M2 4h4" : "M2.500 2.500l3 3M5.500 2.500l-3 3"} stroke="#fff" /></Pic>
);
const Wheel = () => <Pic w={22}><path d="M11 .5h9.500a1 1 0 0 1 1 1V11A10.500 10.500 0 1 1 11 .5z" fill="#f6f8f8" stroke="#9b9fa3" strokeWidth="1.500" /><circle cx="11" cy="11" r="5.500" stroke="#9b9fa3" /><path d="M11 3a8 8 0 0 1 8 8M5 17l2-2M17 17l-2-2" stroke="#c5c9cc" /></Pic>;
const ZoomRegion = () => <Pic w={16}><path d="M.5.500h10v10H.500z" fill="#b9cfae" stroke="#8fae80" strokeDasharray="2 1" /><circle cx="10.500" cy="10.500" r="3.500" fill="#f2f2f2" stroke="#999" /><path d="M13 13l3 3" stroke="#888" strokeWidth="2" /></Pic>;

const viewTools: [string, ReactNode][] = [
  ["Detail level", <Hatch />], ["Visual style", <BlueBox />], ["Sun path", <SunOff />], ["Shadows", <SunOff off />], ["Rendering", <Teapot />],
  ["Crop view", <CropOff />], ["Crop region", <CropOff shown />], ["Lock view", <LockHouse />], ["Hide / isolate", <Glasses />], ["Reveal hidden", <Lamp />],
  ["Temporary properties", <Temp />], ["Analytical model", <Analytic />], ["Displacement", <Displace />], ["Constraints", <Constraints />],
];

const DrawingView = () => (
  <View>
    <ViewTabs>
      <ViewTab><House />{"{3D}"}<CloseButton aria-label="Close view"><Cross s={10} /></CloseButton></ViewTab>
      <ViewList aria-label="View list"><Customize /></ViewList>
    </ViewTabs>
    <CanvasRow>
      <Canvas>
        <DuctModel />
        <ViewCube />
        <NavBar>
          <NavEnd aria-label="Close navigation"><Dot /></NavEnd>
          <NavTool $h={38} aria-label="Wheel"><Wheel /></NavTool>
          <NavTool $h={6} aria-label="Wheel options"><Tri c="#999" s={5} /></NavTool>
          <Part $grow={3} />
          <NavRule />
          <NavTool $h={32} aria-label="Zoom"><ZoomRegion /></NavTool>
          <NavTool $h={8} aria-label="Zoom options"><Tri c="#999" s={5} /></NavTool>
          <Part $grow={6} />
          <NavEnd aria-label="Navigation options"><Dot minus /></NavEnd>
        </NavBar>
      </Canvas>
      <Scroll parts={[290, 17, 290]} />
    </CanvasRow>
    <ViewBar>
      <ScaleButton>1 : 100</ScaleButton>
      <Bar>
        {viewTools.map(([n, icon]) => <ViewTool key={n} aria-label={n}>{icon}</ViewTool>)}
      </Bar>
      <Scroll flat parts={[110, 17, 119]} /><Grip />
    </ViewBar>
  </View>
);

/* ---------- project browser ---------- */
const Browser = styled.aside`display: flex; flex-direction: column; flex: none; width: 366px; border-left: 2px solid ${EDGE};`;
const TreeArea = styled.div`display: flex; flex: 1; min-height: 0; margin: 0 2px 2px 1px; background: #fff;`;
const Tree = styled.ul`flex: 1; overflow: hidden;`;
const Node = styled.li`display: flex; align-items: center; height: 18px; white-space: nowrap;`;
const vdots = "repeating-linear-gradient(#999 0 1px, transparent 1px 2px)";
const hdots = "repeating-linear-gradient(90deg, #999 0 1px, transparent 1px 2px)";
type Line = "full" | "top" | "bottom" | "none";
const Cell = styled.span<{ $line: Line; $tail?: number }>`
  display: flex; align-items: center; flex: none; width: ${p => (p.$tail === 14 ? 24 : 20)}px; height: 18px; padding-left: 5px;
  background-image: ${vdots}, ${hdots};
  background-repeat: no-repeat;
  background-size: 1px ${p => ({ full: 18, top: 10, bottom: 8, none: 0 })[p.$line]}px, ${p => p.$tail ?? 0}px 1px;
  background-position: 9px ${p => (p.$line === "bottom" ? 10 : 0)}px, 9px 10px;
`;
const Expander = styled.button<{ $open?: boolean }>`
  width: 9px; height: 9px; margin-top: 3px; border: 1px solid #919191; background-color: #fff;
  background-image: linear-gradient(#2a4ba0, #2a4ba0), linear-gradient(#2a4ba0, #2a4ba0);
  background-repeat: no-repeat; background-position: center;
  background-size: 5px 1px, 1px ${p => (p.$open ? 0 : 5)}px;
`;
const IconCell = styled.span`display: grid; place-items: center; width: 20px;`;
const Label = styled.span<{ $sel?: boolean; $bold?: boolean }>`
  padding: 0 3px; line-height: 18px; background: ${p => (p.$sel ? "#e2e2e2" : "none")}; font-weight: ${p => (p.$bold ? 700 : 400)};
`;
type Item = { t: string; lv: 0 | 1 | 2; lines: Line[]; open?: boolean; leaf?: boolean; icon?: ReactNode; sel?: boolean; bold?: boolean };
const families = ["Annotation Symbols", "Cable Trays", "Ceilings", "Conduits", "Curtain Panels", "Curtain Systems", "Curtain Wall Mullions", "Detail Items",
  "Duct Insulations", "Duct Linings", "Duct Systems", "Ducts", "Flex Ducts", "Flex Pipes", "Floors", "Pattern", "Pipe Fittings", "Pipe Insulations", "Pipes",
  "Piping Systems", "Railings"];
const items: Item[] = [
  { t: "Views (Family and Type)", lv: 0, lines: ["bottom"], open: true, icon: <BViews />, sel: true },
  { t: "Floor Plans (Mech 1-100)", lv: 1, lines: ["full", "full"], open: true },
  { t: "Datum", lv: 2, lines: ["full", "full", "top"], leaf: true },
  { t: "3D Views (3D View Review)", lv: 1, lines: ["full", "full"], open: true },
  { t: "{3D}", lv: 2, lines: ["full", "full", "top"], leaf: true, bold: true },
  { t: "Elevations (Elevation_Mech)", lv: 1, lines: ["full", "top"], open: true },
  { t: "East", lv: 2, lines: ["full", "none", "full"], leaf: true },
  { t: "North", lv: 2, lines: ["full", "none", "full"], leaf: true },
  { t: "South", lv: 2, lines: ["full", "none", "full"], leaf: true },
  { t: "West", lv: 2, lines: ["full", "none", "top"], leaf: true },
  { t: "Legends", lv: 0, lines: ["full"], icon: <BLegends /> },
  { t: "Schedules/Quantities (all)", lv: 0, lines: ["full"], leaf: true, icon: <BSched /> },
  { t: "Sheets (Sheet Discipline)", lv: 0, lines: ["full"], open: true, icon: <BSheets /> },
  { t: "xx", lv: 1, lines: ["full", "top"] },
  { t: "Families", lv: 0, lines: ["full"], open: true, icon: <BFam /> },
  ...families.map(t => ({ t, lv: 1 as const, lines: ["full", "full"] as Line[] })),
];
const ProjectBrowser = () => (
  <Browser>
    <PaletteHead>Project Browser - Crashing.rvt<CloseButton aria-label="Close browser"><Cross s={10} /></CloseButton></PaletteHead>
    <TreeArea>
      <Tree>
        {items.map(it => (
          <Node key={it.t}>
            {it.lines.map((line, i) => {
              const last = i === it.lv;
              return (
                <Cell key={i} $line={line} $tail={last ? (it.lv === 0 ? 11 : 14) : undefined}>
                  {last && !it.leaf && <Expander $open={it.open} aria-label={`Toggle ${it.t}`} />}
                </Cell>
              );
            })}
            {it.icon && <IconCell>{it.icon}</IconCell>}
            <Label $sel={it.sel} $bold={it.bold}>{it.t}</Label>
          </Node>
        ))}
      </Tree>
      <Scroll parts={[0, 467, 146]} />
    </TreeArea>
  </Browser>
);

/* ---------- status bar ---------- */
const Status = styled.footer`display: flex; align-items: center; flex: none; height: 24px; padding: 0 19px 0 2px; background: ${EDGE};`;
const Message = styled.span`width: 297px; white-space: nowrap;`;
const Exclude = styled.label`display: flex; align-items: center; gap: 3px; margin-left: 9px;`;
const GreenTick = styled.span`
  display: grid; width: 15px; height: 15px;
  > * { grid-area: 1 / 1; }
  > input { appearance: none; width: 15px; height: 15px; border: 1px solid #333; background: #fff; }
  > svg { margin: 1px; pointer-events: none; }
`;
const Push = styled.i`flex: 1;`;
const StatusRule = styled.i`width: 1px; height: 20px; margin-left: 7px; background: #dedede;`;
const StatusTool = styled.button<{ $w?: number }>`display: grid; place-items: center; width: ${p => p.$w ?? 26}px; height: 20px;`;
const Count = styled.span`color: #1c3f6e;`;

const tabs = ["Architecture", "Structure", "Systems", "Insert", "Annotate", "Analyze", "Massing & Site", "Collaborate", "View", "Manage", "Add-Ins",
  "Quantification", "Site Designer", "BIM One", "ModPlus", "SM", "Modify", "Precast"];

const bigModify: [string, ReactNode][] = [
  ["Align", <Align />], ["Offset", <Offset />], ["Mirror pick axis", <Mirror />], ["Mirror draw axis", <Mirror draw />],
  ["Move", <Move />], ["Copy", <CopyBig />], ["Rotate", <Rotate />], ["Trim to corner", <TrimCorner />],
];
const smallModify: [string, ReactNode][] = [
  ["Split", <Split1 />], ["Split with gap", <Split2 />], ["Unpin", <Unpin />], ["Array", <ArrayIcon />], ["Scale", <Scale />], ["Pin", <Pin />],
  ["Trim single", <Trim1 />], ["Trim multiple", <Trim1 multi />], ["Delete", <Delete />],
];

export default function App() {
  return (
    <>
      <GlobalStyle />
      <Window>
        <TitleBar>
          <Tool name="Application"><RLogo>R</RLogo></Tool><Tool name="Home"><PanelIcon /></Tool><Gap $w={5} />
          <Tool name="Open"><Folder /></Tool><Tool name="Save"><Save /></Tool><Tool name="Sync"><Sync /></Tool><Drop />
          <Tool name="Undo"><Undo /></Tool><Drop /><Tool name="Redo"><Undo flip /></Tool><Drop />
          <Tool name="Print"><Print /></Tool><TitleRule />
          <Tool name="Measure"><MeasureSmall /></Tool><Drop /><Tool name="Dimension"><DimSmall /></Tool><Tool name="Tag"><Tag /></Tool>
          <Tool name="Text"><LetterA>A</LetterA></Tool><TitleRule />
          <Tool name="Render"><Sphere /></Tool><Drop /><TitleRule />
          <Tool name="3D view"><House /></Tool><Drop /><Tool name="Section"><SectionMark /></Tool><Gap $w={2} /><Tool name="Thin lines" on><ThinLines /></Tool><TitleRule />
          <Tool name="Close inactive"><CloseHidden /></Tool><Tool name="Switch windows"><Switch /></Tool><Drop />
          <IconButton $w={18} aria-label="Customize"><Customize /></IconButton>
          <Title>Crashing.rvt - 3D View: {"{3D}"}</Title>
          <IconButton $w={12} aria-label="Expand search"><Pic w={4} h={7}><path d="M0 0l4 3.500L0 7z" fill="#333" stroke="none" /></Pic></IconButton>
          <Gap $w={2} />
          <Search placeholder="Type a keyword or phrase" aria-label="Search" />
          <Tool name="Search"><Binoculars /></Tool><Tool name="Subscription"><Dish /></Tool><Tool name="Favorites"><Star /></Tool><Tool name="Account"><User /></Tool>
          <UserName>Pavel.Plotitsyn</UserName><Drop /><Gap $w={5} /><Tool name="Store"><Cart /></Tool><Gap $w={2} /><TitleRule /><Gap $w={2} />
          <Tool name="Help"><HelpMark>?</HelpMark></Tool><Drop /><Gap $w={12} />
          <Tool name="Minimise"><Minimise /></Tool><Tool name="Maximise"><Maximise /></Tool><Tool name="Close"><Cross s={12} c="#fff" w={2} /></Tool>
        </TitleBar>

        <TabRow>
          <TabList>
            <Tab $kind="file">File</Tab>
            {tabs.map(t => <Tab key={t} $kind={t === "Modify" ? "active" : undefined}>{t}</Tab>)}
          </TabList>
          <Collapse aria-label="Collapse ribbon">
            <Pic w={15} h={9}><path d="M.5.500h14v8H.500z" fill="#eef2f6" stroke="#333" /><path d="M5 6h5L7.500 3z" fill="#222" stroke="none" /></Pic><Tri c="#cfe0ee" s={5} />
          </Collapse>
        </TabRow>

        <Ribbon>
          <RibbonPanel $w={58}>
            <PanelBody><BigButton $on><Cursor />Modify</BigButton></PanelBody>
            <PanelTitle>Select <Tri s={8} /></PanelTitle>
          </RibbonPanel>
          <RibbonPanel $w={64}>
            <PanelBody><Stack $rows={2}><RibbonCell aria-label="Type properties"><TypeProps /></RibbonCell><RibbonCell $on aria-label="Properties"><PropsBig /></RibbonCell></Stack></PanelBody>
            <PanelTitle>Properties</PanelTitle>
          </RibbonPanel>
          <RibbonPanel $w={80}>
            <PanelBody $gap={4}>
              <BigButton $off><Paste /><span>Paste</span><Tri c="#999" s={5} /></BigButton>
              <Stack $rows={3} $cols="24px"><RibbonCell aria-label="Cut"><Scissors /></RibbonCell><RibbonCell aria-label="Copy"><CopyIcon /></RibbonCell><RibbonCell aria-label="Match type"><MatchType /></RibbonCell></Stack>
            </PanelBody>
            <PanelTitle>Clipboard</PanelTitle>
          </RibbonPanel>
          <RibbonPanel $w={139}>
            <PanelBody>
              <Stack $rows={3} $cols="67px 26px 24px 10px">
                <TextTool><Cope />Cope<Tri s={5} /></TextTool><RibbonCell aria-label="Cut geometry"><Offset16 /></RibbonCell><RibbonCell aria-label="Opening"><Opening /></RibbonCell><i />
                <TextTool><CutIcon />Cut<Tri s={5} /></TextTool><RibbonCell aria-label="Beam joins"><BeamJoin /></RibbonCell><RibbonCell aria-label="Wall joins"><WallJoin /></RibbonCell><RibbonCell aria-label="More"><Tri s={5} /></RibbonCell>
                <TextTool><Join />Join<Tri s={5} /></TextTool><RibbonCell aria-label="Split face"><SplitFace /></RibbonCell><RibbonCell aria-label="Demolish"><Hammer /></RibbonCell><i />
              </Stack>
            </PanelBody>
            <PanelTitle>Geometry</PanelTitle>
          </RibbonPanel>
          <RibbonPanel $w={238}>
            <PanelBody>
              <Stack $rows={2} $cols="repeat(4, 39px)">
                {bigModify.map(([n, icon]) => <RibbonCell key={n} aria-label={n}>{icon}</RibbonCell>)}
              </Stack>
              <Stack $rows={3} $cols="repeat(3, 25px)">
                {smallModify.map(([n, icon]) => <RibbonCell key={n} aria-label={n}>{icon}</RibbonCell>)}
              </Stack>
            </PanelBody>
            <PanelTitle>Modify</PanelTitle>
          </RibbonPanel>
          <RibbonPanel $w={65}>
            <PanelBody>
              <Stack $rows={3} $cols="20px 14px 26px">
                <RibbonCell aria-label="Hide"><Bulb /></RibbonCell><RibbonCell aria-label="More"><Tri s={5} /></RibbonCell><RibbonCell aria-label="Displace"><Cubes /></RibbonCell>
                <RibbonCell aria-label="Override"><Brush /></RibbonCell><RibbonCell aria-label="More"><Tri s={5} /></RibbonCell><RibbonCell aria-label="Linework"><Linework /></RibbonCell>
                <RibbonCell aria-label="Selection box"><Box3 /></RibbonCell>
              </Stack>
            </PanelBody>
            <PanelTitle>View</PanelTitle>
          </RibbonPanel>
          <RibbonPanel $w={56}>
            <PanelBody>
              <Stack $rows={2} $cols="36px 14px">
                <RibbonCell aria-label="Measure"><RulerBig /></RibbonCell><RibbonCell aria-label="More"><Tri s={5} /></RibbonCell>
                <RibbonCell aria-label="Dimension"><DimBig /></RibbonCell><RibbonCell aria-label="More"><Tri s={5} /></RibbonCell>
              </Stack>
            </PanelBody>
            <PanelTitle>Measure</PanelTitle>
          </RibbonPanel>
          <RibbonPanel $w={82} $last>
            <PanelBody>
              <Stack $rows={2} $cols="39px 39px">
                <RibbonCell aria-label="Create parts"><CreateParts /></RibbonCell><RibbonCell aria-label="Create assembly"><CreateAsm /></RibbonCell>
                <RibbonCell aria-label="Create group"><Group /></RibbonCell><RibbonCell aria-label="Create similar"><Similar /></RibbonCell>
              </Stack>
            </PanelBody>
            <PanelTitle>Create</PanelTitle>
          </RibbonPanel>
        </Ribbon>
        <OptionsBar />

        <Dock>
          <PropertiesPalette />
          <DrawingView />
          <ProjectBrowser />
        </Dock>

        <Status>
          <Message>Click to select, TAB for alternates, CTRL adds, SHIFT uns</Message>
          <Worksets /><Gap $w={8} />
          <SelectWrap $w={204} $h={20} $plain><select aria-label="Workset"><option> </option></select><Chevron dir="down" w={1} c="#999" /></SelectWrap>
          <Gap $w={8} /><EditReq /><Gap $w={5} /><Count>:0</Count><Gap $w={24} />
          <OptionsIcon /><Gap $w={10} /><AddSet /><Gap $w={8} />
          <SelectWrap $w={204} $h={20} $plain><select aria-label="Design option"><option>Main Model</option></select><Chevron dir="down" w={1} /></SelectWrap>
          <Exclude><GreenTick><input type="checkbox" defaultChecked /><Pic w={13}><path d="M3 6l3 4 5-8" stroke="#3aa02c" strokeWidth="2" /></Pic></GreenTick>Exclude Options</Exclude>
          <Push />
          <StatusTool aria-label="Select links"><SelLinks /></StatusTool><StatusTool aria-label="Select underlay"><SelUnder /></StatusTool>
          <StatusTool aria-label="Select pinned"><SelPin /></StatusTool><StatusTool aria-label="Select by face"><SelFace /></StatusTool>
          <StatusTool aria-label="Drag on selection"><SelDrag /></StatusTool><StatusTool aria-label="Background processes"><Gear /></StatusTool>
          <StatusTool $w={20} aria-label="Filter"><Funnel /></StatusTool><Count>:0</Count><Gap $w={58} /><StatusRule /><StatusRule />
        </Status>
      </Window>
    </>
  );
}
